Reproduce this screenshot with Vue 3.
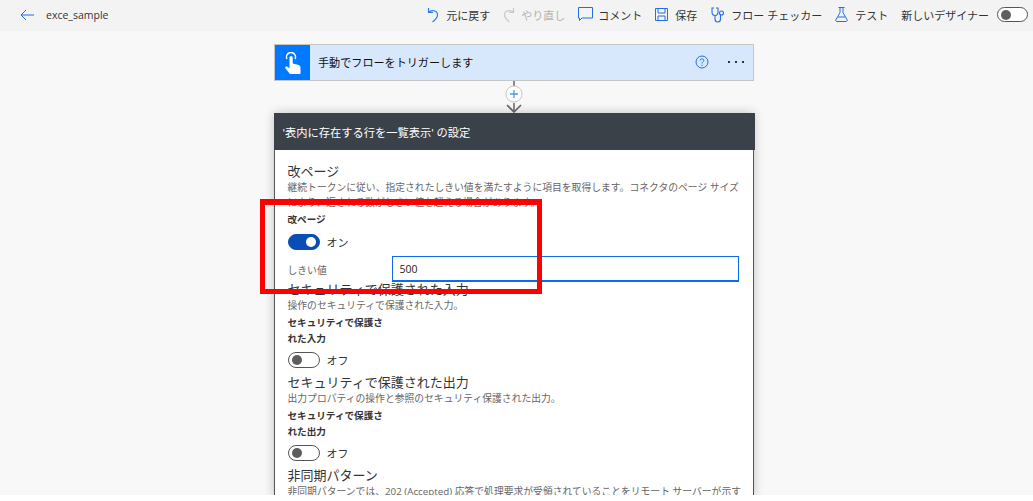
<template>
  <div class="page">
    <header class="topbar">
      <svg class="back" width="14" height="12" viewBox="0 0 14 12" fill="none" stroke="#1f6fe8" stroke-width="1">
        <path d="M14 6H1M6 1L1 6l5 5" />
      </svg>
      <span class="flow-name">exce_sample</span>
      <div class="tools">
        <div class="tool">
          <svg width="12" height="16" viewBox="0 0 12 16" fill="none" stroke="#2b7de9" stroke-width="1.2">
            <path d="M1.5 1v4.5H6M1.5 5.5C4 2.500 10.500 3 10.500 8c0 3-2.500 5-5 7" />
          </svg>
          <span>元に戻す</span>
        </div>
        <div class="tool off">
          <svg width="12" height="16" viewBox="0 0 12 16" fill="none" stroke="#c8c8c8" stroke-width="1.2">
            <path d="M10.500 1v4.500H6M10.500 5.500C8 2.500 1.500 3 1.500 8c0 3 2.500 5 5 7" />
          </svg>
          <span>やり直し</span>
        </div>
        <div class="tool tight">
          <svg width="15" height="15" viewBox="0 0 15 15" fill="none" stroke="#1f6fe8" stroke-width="1">
            <path d="M.5.500h14v10.500H4l-2.500 2.500V11H.5z" />
          </svg>
          <span>コメント</span>
        </div>
        <div class="tool">
          <svg width="13" height="13" viewBox="0 0 13 13" fill="none" stroke="#1f6fe8" stroke-width="1">
            <path d="M.5.500h12v12H.5zM3 .500v4.500h7V.500M3 12.500V8h7v4.500" />
          </svg>
          <span>保存</span>
        </div>
        <div class="tool mid">
          <svg width="14" height="16" viewBox="0 0 14 16" fill="none" stroke="#1f6fe8" stroke-width="1.100">
            <path d="M3 1H1v4c0 2.200 1.500 3.500 3 3.500S7 7.200 7 5V1H5M4 8.500V12c0 1.700 1.200 3 2.800 3s2.700-1.300 2.700-3V8" />
            <circle cx="10.500" cy="6" r="2" />
          </svg>
          <span>フロー チェッカー</span>
        </div>
        <div class="tool">
          <svg width="13" height="15" viewBox="0 0 13 15" fill="none" stroke="#1f6fe8" stroke-width="1">
            <path d="M3.500.500h6M5 .500v5L.8 13c-.3.700.1 1.500 1 1.500h9.400c.9 0 1.300-.8 1-1.500L8 5.500v-5M3 10h7" />
          </svg>
          <span>テスト</span>
        </div>
        <div class="designer">
          <span>新しいデザイナー</span>
          <span class="toggle small"></span>
        </div>
      </div>
    </header>

    <main class="canvas">
      <div class="trigger">
        <div class="trigger-icon">
          <svg width="16" height="22" viewBox="0 0 16 22">
            <path d="M2 7a4.500 4.500 0 1 1 8 0" fill="none" stroke="#fff" stroke-width="1.400" />
            <path fill="#fff" d="M4.500 5.500a1.600 1.600 0 0 1 3.200 0v6l5.300 1.300c1.400.4 2.500 1.300 2.500 2.900V22H5l-4.500-5.500c-.9-1.200.6-2.600 1.900-1.700l2.100 1.500z" />
          </svg>
        </div>
        <span class="trigger-title">手動でフローをトリガーします</span>
        <svg class="help" width="14" height="14" viewBox="0 0 14 14" fill="none" stroke="#1f6fe8" stroke-width="1">
          <circle cx="7" cy="7" r="6" />
          <path d="M5.200 5.500C5.200 4.400 6 3.800 7 3.800s1.800.7 1.800 1.600C8.800 6.800 7 6.800 7 8.500M7 9.700v1.200" />
        </svg>
        <span class="dots"><i></i><i></i><i></i></span>
      </div>

      <svg class="connector" width="30" height="32" viewBox="0 0 30 32" fill="none">
        <path d="M15 0v5" stroke="#666" stroke-width="1.500" />
        <path d="M15 22v9" stroke="#666" stroke-width="1.500" />
        <path d="M8 24l7 7 7-7" stroke="#666" stroke-width="1.600" />
        <circle cx="15" cy="13" r="8" fill="#fff" stroke="#c8c8c8" />
        <path d="M15 9v8M11 13h8" stroke="#4a9be8" stroke-width="1.300" />
      </svg>

      <section class="panel">
        <div class="panel-head">'表内に存在する行を一覧表示' の設定</div>
        <div class="panel-body">
          <div class="block first">
            <div class="block-title">改ページ</div>
            <p class="block-desc">継続トークンに従い、指定されたしきい値を満たすように項目を取得します。コネクタのページ サイズ<br />により、返される数がしきい値を超える場合があります。</p>
            <div class="label one">改ページ</div>
            <div class="switch-row">
              <span class="toggle on"></span>
              <span>オン</span>
            </div>
            <div class="threshold">
              <span class="threshold-label">しきい値</span>
              <div class="threshold-input">500</div>
            </div>
          </div>

          <div v-for="s in sections" :key="s.title" class="block">
            <div class="block-title">{{ s.title }}</div>
            <p class="block-desc">{{ s.desc }}</p>
            <div class="label" v-if="s.label">{{ s.label }}</div>
            <div class="switch-row" v-if="s.label">
              <span class="toggle"></span>
              <span>オフ</span>
            </div>
          </div>
        </div>
      </section>
    </main>

    <div class="highlight"></div>
  </div>
</template>

<script setup>
const sections = [
  {
    title: 'セキュリティで保護された入力',
    desc: '操作のセキュリティで保護された入力。',
    label: 'セキュリティで保護された入力',
  },
  {
    title: 'セキュリティで保護された出力',
    desc: '出力プロパティの操作と参照のセキュリティ保護された出力。',
    label: 'セキュリティで保護された出力',
  },
  {
    title: '非同期パターン',
    desc: '非同期パターンでは、202 (Accepted) 応答で処理要求が受領されていることをリモート サーバーが示す',
  },
];
</script>

<style scoped>
.page {
  position: relative;
  height: 495px;
  overflow: hidden;
  display: flex;
  flex-direction: column;
  background: #f8f8f8;
  color: #333;
  font-family: "Open Sans", "Noto Sans CJK JP", sans-serif;
}
.topbar {
  box-sizing: border-box;
  height: 31px;
  flex: none;
  display: flex;
  align-items: center;
  padding: 0 5px 2px 20px;
  background: #f3f3f3;
  font-size: 11px;
}
.back {
  margin-right: 12px;
}
.flow-name {
  font-size: 10.5px;
}
.tools {
  margin-left: auto;
  display: flex;
  align-items: center;
  gap: 13px;
}
.tool {
  display: flex;
  align-items: center;
  gap: 7px;
}
.tool.off {
  color: #b4b4b4;
  gap: 6px;
}
.tool.tight {
  gap: 5px;
}
.tool.mid {
  gap: 6px;
  margin-left: 1px;
}
.designer {
  display: flex;
  align-items: center;
  gap: 8px;
}
.toggle {
  position: relative;
  display: block;
  flex: none;
  box-sizing: border-box;
  width: 32px;
  height: 16px;
  border: 1px solid #555;
  border-radius: 8px;
  background: #fff;
}
.toggle::after {
  content: "";
  position: absolute;
  left: 3px;
  top: 2px;
  width: 10px;
  height: 10px;
  border-radius: 50%;
  background: #605e5c;
}
.toggle.on {
  border-color: #0a4db5;
  background: #0a4db5;
}
.toggle.on::after {
  left: auto;
  right: 3px;
  background: #fff;
}
.toggle.small {
  width: 31px;
  height: 15px;
}
.canvas {
  flex: 1;
  display: flex;
  flex-direction: column;
  align-items: center;
  padding: 13px 5px 0 0;
  min-height: 0;
}
.trigger {
  flex: none;
  box-sizing: border-box;
  width: 480px;
  height: 37px;
  display: flex;
  align-items: center;
  border: 1px solid #c6c6c6;
  background: #d7e8fc;
  color: #111;
  font-size: 11px;
}
.trigger-icon {
  align-self: stretch;
  width: 35px;
  display: flex;
  align-items: center;
  justify-content: center;
  background: #0078ff;
}
.trigger-title {
  margin: 0 0 2px 8px;
  font-size: 11.100px;
}
.help {
  margin: 0 0 2px auto;
}
.dots {
  display: flex;
  gap: 5px;
  margin: 0 9px 2px 19px;
}
.dots i {
  width: 2px;
  height: 2px;
  background: #333;
}
.connector {
  flex: none;
  display: block;
}
.panel {
  flex: none;
  box-sizing: border-box;
  width: 480px;
  border-left: 1.500px solid #555;
  border-right: 1.500px solid #555;
  background: #fff;
  box-shadow: 0 0 10px rgba(0, 0, 0, 0.22);
}
.panel-head {
  height: 37px;
  display: flex;
  align-items: center;
  margin: 0 -1.500px;
  padding-left: 9px;
  background: #3a4149;
  color: #fff;
  font-size: 11.250px;
}
.panel-body {
  padding: 13px 14px 0 12.500px;
}
.block {
  margin-top: 6px;
}
.block.first {
  margin-top: 0;
}
.block.first + .block {
  margin-top: 0;
}
.block-title {
  font-size: 13px;
  line-height: 16px;
  color: #333;
}
.block-desc {
  margin: 1px 0 0;
  font-size: 9.800px;
  line-height: 15px;
  color: #666;
  white-space: nowrap;
}
.label {
  width: 100px;
  margin-top: 2px;
  font-size: 9.600px;
  font-weight: 700;
  line-height: 16px;
  color: #333;
}
.switch-row {
  display: flex;
  align-items: center;
  gap: 7px;
  height: 16px;
  margin-top: 5px;
  font-size: 11px;
}
.first .switch-row {
  margin-top: 6px;
}
.threshold {
  display: flex;
  align-items: center;
  margin: 6px 0 -1px;
}
.threshold-label {
  width: 104px;
  margin-top: 2px;
  font-size: 9.800px;
  color: #666;
}
.threshold-input {
  flex: 1;
  box-sizing: border-box;
  height: 26px;
  display: flex;
  align-items: center;
  padding-left: 7px;
  border: 1px solid #0a6cf0;
  border-bottom-width: 2px;
  font-size: 10.500px;
  color: #222;
}
.highlight {
  position: absolute;
  left: 260px;
  top: 199px;
  width: 282px;
  height: 95px;
  box-sizing: border-box;
  border: 5px solid #f00;
  border-top-width: 6px;
  pointer-events: none;
}
</style>

<style>
html,
body {
  background: #fff;
}
</style>
